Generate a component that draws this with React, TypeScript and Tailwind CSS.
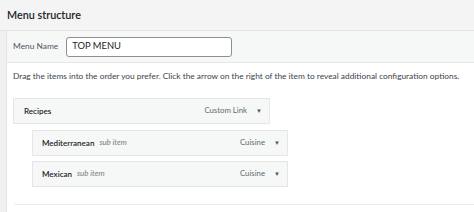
const items = [
	{ title: "Mediterranean", type: "Cuisine" },
	{ title: "Mexican", type: "Cuisine" },
];

const Arrow = () => (
	<span className="ml-[9px] text-[6px] leading-none text-[#50575e]">&#9660;</span>
);

export default function App() {
	return (
		<div
			className="flex h-[212px] w-[474px] flex-col overflow-hidden bg-[#f0f0f1] text-[#1d2327]"
			style={{ fontFamily: 'Lato, "Liberation Sans", sans-serif' }}
		>
			<div className="flex h-[31px] shrink-0 items-center border-b border-[#e4e4e4] bg-[#f4f4f4] pl-[7px] text-[10.8px] font-semibold">
				Menu structure
			</div>
			<div className="flex flex-1">
				<div className="w-[7px] shrink-0 border-r border-[#e4e4e4]" />
				<div className="flex flex-1 flex-col bg-white">
					<div className="flex h-[32px] items-center border-b border-[#e6e6e6] bg-[#f6f7f7] pl-[6px]">
						<span className="mr-[8px] text-[8.4px] text-[#50575e]">Menu Name</span>
						<div className="flex h-[20px] w-[166px] items-center rounded-[3px] border border-[#8c8f94] bg-white px-[5px] text-[9.4px]">
							TOP MENU
						</div>
					</div>
					<div className="whitespace-nowrap pl-[6px] pt-[7px] text-[8.35px] leading-[12px] text-[#3c434a]">
						Drag the items into the order you prefer. Click the arrow on the right of the item to reveal additional configuration options.
					</div>
					<div className="ml-[6px] mt-[16px] flex h-[26px] w-[257px] items-center border border-[#e6e6e6] bg-[#f6f7f7] pl-[10px] pr-[7px]">
						<span className="text-[8px] font-semibold">Recipes</span>
						<span className="ml-auto text-[7.8px] text-[#646970]">Custom Link</span>
						<Arrow />
					</div>
					<div className="ml-[25px] mt-[6px] flex flex-col gap-[5px]">
						{items.map((item) => (
							<div
								key={item.title}
								className="flex h-[26px] w-[256px] items-center border border-[#e6e6e6] bg-[#f6f7f7] pl-[9px] pr-[7px]"
							>
								<span className="text-[8px] font-semibold">{item.title}</span>
								<span className="ml-[5px] text-[7.8px] italic text-[#787c82]">sub item</span>
								<span className="ml-auto text-[7.8px] text-[#646970]">{item.type}</span>
								<Arrow />
							</div>
						))}
					</div>
					<div className="ml-[7px] mt-[17px] border-t border-[#ececec]" />
				</div>
			</div>
		</div>
	);
}
